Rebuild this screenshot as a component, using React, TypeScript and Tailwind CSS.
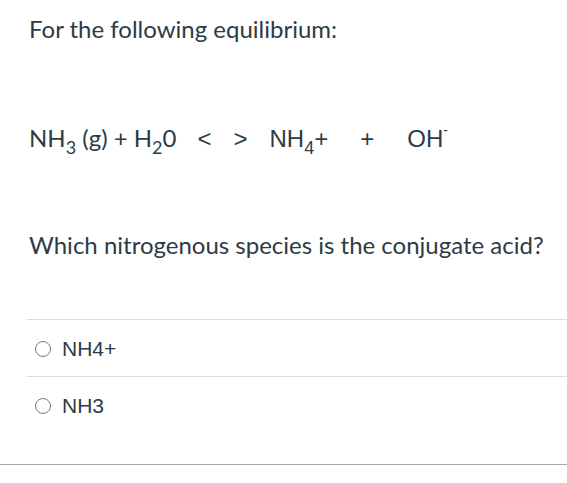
import React from "react";

function Radio() {
  return (
    <span className="inline-block w-[16px] h-[16px] mt-[2px] rounded-full border-[1.5px] border-[#7a7a7a] bg-white shrink-0" />
  );
}

function Option({ label }: { label: string }) {
  return (
    <div className="border-t border-[#dcdcdc] h-[57px] flex items-center pl-[8px] gap-[11px]">
      <Radio />
      <span className="leading-none">{label}</span>
    </div>
  );
}

export default function App() {
  return (
    <div className="w-[567px] h-[483px] bg-white text-[#2d3b45] font-['Lato',sans-serif] overflow-hidden">
      <div className="pl-[29px] pt-[11px]">
        <p className="text-[24px] leading-[36px]">For the following equilibrium:</p>
        <p className="mt-[73px] text-[24px] leading-[36px] whitespace-nowrap">
          <span>
            NH<sub className="text-[18px] relative top-[1px] align-sub leading-none">3</sub> (g) + H<sub className="text-[18px] relative top-[1px] align-sub leading-none">2</sub>0
          </span>
          <span className="font-['Liberation_Sans',Arial,sans-serif] ml-[21px]">&lt;</span>
          <span className="font-['Liberation_Sans',Arial,sans-serif] ml-[22px]">&gt;</span>
          <span className="font-['Liberation_Sans',Arial,sans-serif] ml-[22px]">
            NH<sub className="text-[18px] relative top-[1px] align-sub leading-none">4</sub>+
          </span>
          <span className="font-['Liberation_Sans',Arial,sans-serif] ml-[32px]">+</span>
          <span className="font-['Liberation_Sans',Arial,sans-serif] ml-[33px]">
            OH<sup className="text-[14px] relative top-[-12px] leading-none">-</sup>
          </span>
        </p>
        <p className="mt-[70px] text-[24px] leading-[36px]">Which nitrogenous species is the conjugate acid?</p>
      </div>
      <div className="ml-[27px] mt-[56px] font-['Liberation_Sans',Arial,sans-serif] text-[21px] text-[#2d3b45]">
        <Option label="NH4+" />
        <Option label="NH3" />
      </div>
      <div className="mt-[31px] border-t border-[#a8a8a8]" />
    </div>
  );
}
